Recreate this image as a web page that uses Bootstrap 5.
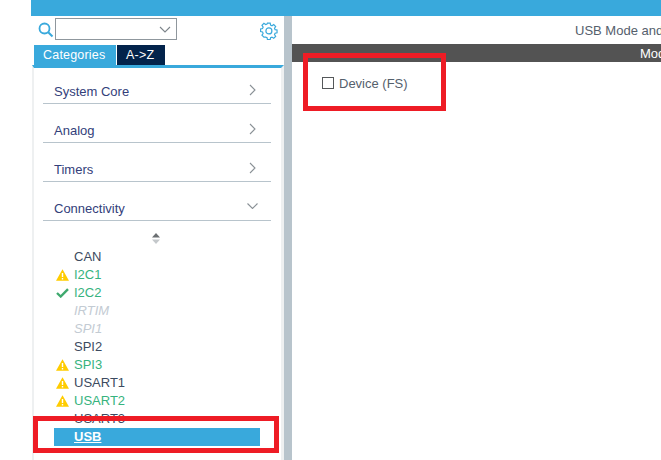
<!DOCTYPE html>
<html lang="en">
<head>
    <meta charset="UTF-8">
    <meta name="viewport" content="width=device-width, initial-scale=1.0">
    <title>USB Mode and Configuration</title>
    <link href="https://cdn.jsdelivr.net/npm/bootstrap@5.3.0/dist/css/bootstrap.min.css" rel="stylesheet">
    <style>
        html, body { height: 460px; overflow: hidden; }
        body { background: #fff; font-family: "Liberation Sans", Arial, sans-serif; font-size: 13px; color: #3c4a60; }
        .app { margin-left: 31px; height: 460px; position: relative; }
        .topbar { height: 16px; background: #39a9dc; }
        .work { height: 444px; }
        .side { width: 253px; flex: none; }
        .searchrow { height: 29px; padding: 2px 0 0 7px; }
        .finder { width: 16px; flex: none; margin-top: 4px; margin-right: 1px; }
        .fakeselect { width: 122px; height: 22px; flex: none; border: 1px solid #8f979d; padding-right: 5px; }
        .cog { flex: none; margin: 4px 0 0 83px; }
        .tabrow { height: 20px; margin-left: 3px; gap: 1px; }
        .tabitem { height: 20px; padding: 1px 0 0 9px; color: #fff; font-size: 12.5px; letter-spacing: .2px; line-height: 19px; }
        .tab-cat { width: 82px; background: #39a9dc; }
        .tab-az { width: 48px; background: #03234b; }
        .sidebody { margin-left: 1px; height: 395px; border-top: 3px solid #39a9dc; border-left: 2px solid #eef0f1; border-right: 3px solid #eef0f1; overflow: hidden; }
        .catrow { height: 39px; margin: 0 10px 0 9px; padding: 0 15px 0 11px; border-bottom: 1px solid #b8c4cc; color: #33407a; }
        .catrow:first-child { height: 36px; }
        .catrow span { line-height: 15px; padding-bottom: 4px; }
        .chev { margin-bottom: 7px; }
        .chev-down { margin: 0 -2px 11px 0; }
        .sorter { height: 27px; padding: 0 4px 4px 0; }
        .perilist { margin: 0 0 0 20px; width: 206px; }
        .perilist li { height: 18px; line-height: 18px; display: flex; align-items: center; white-space: nowrap; }
        .slot { width: 20px; flex: none; display: flex; align-items: center; justify-content: flex-start; padding-left: 2px; }
        .p-on { color: #36b37e; }
        .p-off { color: #c3cbd3; font-style: italic; }
        .p-sel { background: #39a9dc; color: #fff; font-weight: 700; text-decoration: underline; }
        .splitter { width: 8px; flex: none; background: #b8c4cc; }
        .mainpane { min-width: 0; overflow: hidden; }
        .paneltitle { height: 28px; padding-left: 283px; white-space: nowrap; color: #55606c; line-height: 30px; }
        .panelbar { height: 18px; background: #535353; color: #fff; padding-left: 348px; white-space: nowrap; line-height: 20px; overflow: hidden; }
        .devrow { padding: 15px 0 0 30px; height: 30px; color: #55606c; box-sizing: content-box; }
        .devrow span:last-child { line-height: 14px; }
        .tickbox { width: 12px; height: 12px; border: 1px solid #55585a; margin-right: 5px; flex: none; }
        .redmark { position: absolute; border: 5px solid #ee1c25; pointer-events: none; }
        .mark-usb { left: 2px; top: 416px; width: 246px; height: 37px; }
        .mark-dev { left: 272px; top: 53px; width: 143px; height: 58px; }
    </style>
</head>
<body>
<div class="app">
    <div class="topbar"></div>
    <div class="work d-flex">
        <div class="side">
            <div class="searchrow d-flex align-items-start">
                <svg class="finder" width="16" height="16" viewBox="0 0 16 16" fill="none" stroke="#39a9dc"><circle cx="6.5" cy="6.5" r="5" stroke-width="1.8"/><path d="M10.2 10.2 14.5 14.5" stroke-width="2"/></svg>
                <div class="fakeselect d-flex align-items-center justify-content-end">
                    <svg width="12" height="7" viewBox="0 0 12 7" fill="none" stroke="#7d858b"><path d="M1 1l5 5 5-5" stroke-width="1.1"/></svg>
                </div>
                <svg class="cog" width="18" height="18" viewBox="0 0 18 18" fill="none" stroke="#39a9dc" stroke-width="1.2">
                    <path d="M7.6 1.2h2.8l.4 2.1 1.4.6 1.8-1.2 2 2-1.2 1.8.6 1.4 2 .4v2.8l-2 .4-.6 1.4 1.2 1.8-2 2-1.8-1.2-1.4.6-.4 2H7.6l-.4-2-1.4-.6L4 15.5l-2-2 1.2-1.8-.6-1.4-2-.4V7.1l2-.4.6-1.4L2 3.5l2-2 1.8 1.2 1.4-.6z" transform="translate(0 -.1) scale(.98)"/>
                    <circle cx="8.9" cy="8.9" r="3"/>
                </svg>
            </div>
            <div class="tabrow d-flex">
                <div class="tabitem tab-cat">Categories</div>
                <div class="tabitem tab-az">A-&gt;Z</div>
            </div>
            <div class="sidebody">
                <div class="catrow d-flex align-items-end justify-content-between"><span>System Core</span><svg class="chev" width="7" height="12" viewBox="0 0 7 12" fill="none" stroke="#8a9196"><path d="M1 1l5 5-5 5" stroke-width="1.1"/></svg></div>
                <div class="catrow d-flex align-items-end justify-content-between"><span>Analog</span><svg class="chev" width="7" height="12" viewBox="0 0 7 12" fill="none" stroke="#8a9196"><path d="M1 1l5 5-5 5" stroke-width="1.1"/></svg></div>
                <div class="catrow d-flex align-items-end justify-content-between"><span>Timers</span><svg class="chev" width="7" height="12" viewBox="0 0 7 12" fill="none" stroke="#8a9196"><path d="M1 1l5 5-5 5" stroke-width="1.1"/></svg></div>
                <div class="catrow d-flex align-items-end justify-content-between"><span>Connectivity</span><svg class="chev-down" width="11" height="6" viewBox="0 0 11 6" fill="none" stroke="#8a9196"><path d="M.5.5l5 5 5-5" stroke-width="1.1"/></svg></div>
                <div class="sorter d-flex justify-content-center align-items-end">
                    <svg width="8" height="11" viewBox="0 0 8 11"><path d="M4 0l4 4.5H0z" fill="#6b6f72"/><path d="M4 11L0 6.5h8z" fill="#c4c8cb"/></svg>
                </div>
                <ul class="perilist list-unstyled">
                    <li><span class="slot"></span>CAN</li>
                    <li class="p-on"><span class="slot"><svg width="13" height="12" viewBox="0 0 13 12"><path d="M6.5.3 13 11.7H0z" fill="#fc0"/><path d="M6.5 4v4M6.5 9v1.4" stroke="#fff" stroke-width="1.4"/></svg></span>I2C1</li>
                    <li class="p-on"><span class="slot"><svg width="13" height="10" viewBox="0 0 13 10" fill="none" stroke="#3fa96e"><path d="M1 5l3.7 3.5L12 1.2" stroke-width="2.4"/></svg></span>I2C2</li>
                    <li class="p-off"><span class="slot"></span>IRTIM</li>
                    <li class="p-off"><span class="slot"></span>SPI1</li>
                    <li><span class="slot"></span>SPI2</li>
                    <li class="p-on"><span class="slot"><svg width="13" height="12" viewBox="0 0 13 12"><path d="M6.5.3 13 11.7H0z" fill="#fc0"/><path d="M6.5 4v4M6.5 9v1.4" stroke="#fff" stroke-width="1.4"/></svg></span>SPI3</li>
                    <li><span class="slot"><svg width="13" height="12" viewBox="0 0 13 12"><path d="M6.5.3 13 11.7H0z" fill="#fc0"/><path d="M6.5 4v4M6.5 9v1.4" stroke="#fff" stroke-width="1.4"/></svg></span>USART1</li>
                    <li class="p-on"><span class="slot"><svg width="13" height="12" viewBox="0 0 13 12"><path d="M6.5.3 13 11.7H0z" fill="#fc0"/><path d="M6.5 4v4M6.5 9v1.4" stroke="#fff" stroke-width="1.4"/></svg></span>USART2</li>
                    <li><span class="slot"></span>USART3</li>
                    <li class="p-sel"><span class="slot"></span>USB</li>
                </ul>
            </div>
        </div>
        <div class="splitter"></div>
        <div class="mainpane flex-grow-1">
            <div class="paneltitle">USB Mode and Configuration</div>
            <div class="panelbar">Mode</div>
            <div class="devrow d-flex align-items-start"><span class="tickbox"></span><span>Device (FS)</span></div>
        </div>
    </div>
    <div class="redmark mark-usb"></div>
    <div class="redmark mark-dev"></div>
</div>
<script src="https://cdn.jsdelivr.net/npm/bootstrap@5.3.0/dist/js/bootstrap.bundle.min.js"></script>
</body>
</html>
